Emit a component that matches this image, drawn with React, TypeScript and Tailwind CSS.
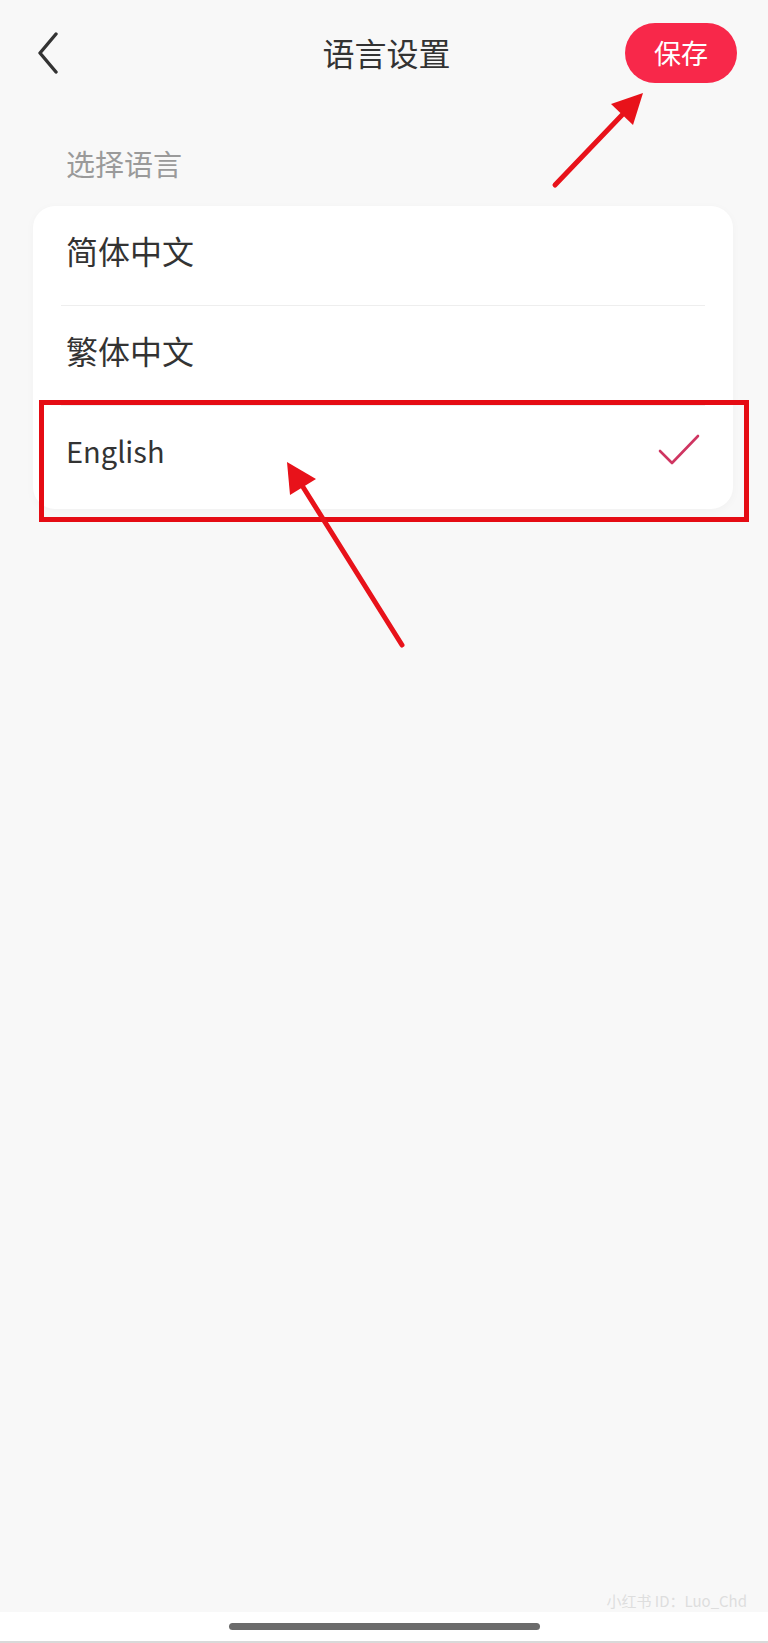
import { useState } from "react";

const languages = [
  { key: "zh-CN", label: "简体中文", size: "text-[32px]" },
  { key: "zh-TW", label: "繁体中文", size: "text-[32px]" },
  { key: "en", label: "English", size: "text-[29px]" },
];

function BackIcon() {
  return (
    <svg width="24" height="42" viewBox="0 0 24 42" fill="none">
      <path d="M20 2 L4 21 L20 40" stroke="#333" strokeWidth="3.4" strokeLinecap="round" strokeLinejoin="round" />
    </svg>
  );
}

function CheckIcon() {
  return (
    <svg width="42" height="32" viewBox="0 0 42 32" fill="none">
      <path d="M2 17 L14 29 L40 2" stroke="#cf3561" strokeWidth="2.6" strokeLinecap="round" strokeLinejoin="round" />
    </svg>
  );
}

// red annotation arrows drawn over the screenshot
function Annotations() {
  return (
    <svg className="pointer-events-none absolute inset-0" width="768" height="1643" viewBox="0 0 768 1643">
      <line x1="555" y1="185" x2="622" y2="115" stroke="#e8121a" strokeWidth="5" strokeLinecap="round" />
      <polygon points="643,93 633,125 611,104" fill="#e8121a" />
      <line x1="402" y1="645" x2="303" y2="487" stroke="#e8121a" strokeWidth="5" strokeLinecap="round" />
      <polygon points="287,462 316,479 290,495" fill="#e8121a" />
    </svg>
  );
}

export default function App() {
  const [selected, setSelected] = useState("en");

  return (
    <div className="relative flex h-[1643px] w-[768px] flex-col overflow-hidden bg-[#f8f8f8] font-['Noto_Sans_CJK_SC',sans-serif] text-[#333]">
      <header className="mt-[23px] grid h-[60px] grid-cols-[1fr_auto_1fr] items-center pl-[36px] pr-[31px]">
        <button className="flex h-[42px] w-[24px] items-center justify-start">
          <BackIcon />
        </button>
        <h1 className="pb-[3px] text-[32px] font-normal leading-[40px] text-[#333]">语言设置</h1>
        <div className="flex justify-end">
          <button className="flex h-[60px] w-[112px] items-center justify-center rounded-full bg-[#f8284a] pb-[2px] text-[27px] leading-none text-white">
            保存
          </button>
        </div>
      </header>

      <div className="mt-[60px] pl-[66px] text-[29px] leading-[40px] text-[#9a9a9a]">选择语言</div>

      <div className="ml-[33px] mt-[23px] w-[700px] rounded-[22px] bg-white pb-[4px] shadow-[0_2px_10px_rgba(0,0,0,0.03)]">
        {languages.map((lang, i) => (
          <div key={lang.key}>
            {i > 0 && <div className="mx-[28px] h-px bg-[#eeeeee]" />}
            <button
              onClick={() => setSelected(lang.key)}
              className="flex h-[99px] w-full items-center justify-between pb-[12px] pl-[33px] pr-[33px] text-left"
            >
              <span className={`${lang.size} leading-[40px] text-[#333]`}>{lang.label}</span>
              {selected === lang.key && <CheckIcon />}
            </button>
          </div>
        ))}
      </div>

      <div className="flex-1" />

      <div className="flex justify-end pr-[21px] pb-[2px] text-[15px] leading-[18px] text-[#dedede]">
        小红书 ID：Luo_Chd
      </div>
      <div className="flex h-[31px] items-center justify-center border-b-2 border-[#d9d9d9] bg-white">
        <div className="h-[7px] w-[311px] rounded-full bg-[#6b6b6b]" />
      </div>

      <div className="pointer-events-none absolute left-[39px] top-[400px] h-[122px] w-[710px] border-[5px] border-[#e50c14]" />
      <Annotations />
    </div>
  );
}
